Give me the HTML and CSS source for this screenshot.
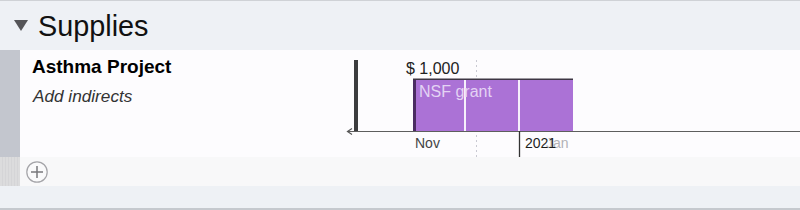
FILE: index.html
```html
<!DOCTYPE html>
<html>
<head>
<meta charset="utf-8">
<link rel="stylesheet" href="styles.css">
</head>
<body>
<div class="panel">
  <div class="header">
    <span class="disclosure"></span>
    <span class="header-title">Supplies</span>
  </div>
  <div class="row">
    <div class="row-bar"></div>
    <div class="row-labels">
      <div class="row-title">Asthma Project</div>
      <div class="row-sub">Add indirects</div>
    </div>
    <svg class="chart" width="470" height="107" viewBox="0 0 470 107">
      <line x1="146.5" y1="10" x2="146.5" y2="107" stroke="#c9c9d2" stroke-width="1" stroke-dasharray="2 3"/>
      <rect x="83" y="29" width="160" height="52" fill="#ab72d6"/>
      <rect x="83" y="29" width="3" height="52" fill="#4b2c62"/>
      <rect x="134" y="29" width="2" height="52" fill="#f6f0fb"/>
      <rect x="188" y="29" width="2" height="52" fill="#f6f0fb"/>
      <rect x="83" y="28.5" width="160" height="1.5" fill="#3e3644"/>
      <line x1="18" y1="81.5" x2="470" y2="81.5" stroke="#5e5e5e" stroke-width="1.2"/>
      <polyline points="22,78.5 17.5,81.5 22,84.5" fill="none" stroke="#555" stroke-width="1.2"/>
      <rect x="24" y="10" width="4" height="71" fill="#3c3c3e"/>
      <line x1="189.5" y1="81" x2="189.5" y2="107" stroke="#333" stroke-width="1.3"/>
      <text x="76" y="24" class="t-amount">$ 1,000</text>
      <text x="89" y="47" class="t-label">NSF grant</text>
      <text x="85" y="98" class="t-axis">Nov</text>
      <text x="216" y="98" class="t-axis-faint">Jan</text>
      <text x="195" y="98" class="t-axis-year">2021</text>
    </svg>
  </div>
  <div class="add-row">
    <div class="add-bar"></div>
    <div class="add-btn">
      <svg width="22" height="22" viewBox="0 0 22 22">
        <circle cx="11" cy="11" r="10.2" fill="#fafafb" stroke="#a4a4a8" stroke-width="1.2"/>
        <line x1="11" y1="5" x2="11" y2="17" stroke="#77777b" stroke-width="1.5"/>
        <line x1="5" y1="11" x2="17" y2="11" stroke="#77777b" stroke-width="1.5"/>
      </svg>
    </div>
  </div>
  <div class="footer"></div>
</div>
</body>
</html>
```

FILE: styles.css
```css
html, body {
  margin: 0;
  padding: 0;
  background: #eef1f5;
}
body {
  width: 800px;
  height: 210px;
  overflow: hidden;
  font-family: "Liberation Sans", Arial, Helvetica, sans-serif;
}
.panel {
  display: flex;
  flex-direction: column;
  width: 800px;
  height: 210px;
  border-top: 1px solid #cfd2d6;
  border-bottom: 2px solid #c5c9ce;
  box-sizing: border-box;
}
.header {
  height: 49px;
  display: flex;
  align-items: center;
  padding-left: 14px;
  background: #eef1f5;
}
.disclosure {
  width: 0;
  height: 0;
  border-left: 7.5px solid transparent;
  border-right: 7.5px solid transparent;
  border-top: 11px solid #555558;
  margin-right: 10px;
}
.header-title {
  font-size: 28.8px;
  line-height: 32px;
  color: #111;
}
.row {
  height: 107px;
  display: flex;
  background: #fdfcfe;
}
.row-bar {
  width: 20px;
  flex-shrink: 0;
  background: #c3c6ce;
}
.row-labels {
  width: 298px;
  flex-shrink: 0;
  padding-left: 12px;
  padding-top: 6px;
}
.row-title {
  font-size: 19px;
  line-height: 22px;
  font-weight: bold;
  color: #000;
}
.row-sub {
  margin-top: 8px;
  padding-left: 1px;
  font-size: 17.2px;
  line-height: 20px;
  font-style: italic;
  color: #333;
}
.chart {
  display: block;
  flex-shrink: 0;
  font-family: "Liberation Sans", Arial, Helvetica, sans-serif;
}
.t-amount {
  font-size: 16px;
  fill: #222;
}
.t-label {
  font-size: 16px;
  fill: #e4d3f4;
}
.t-axis {
  font-size: 14px;
  fill: #444;
}
.t-axis-faint {
  font-size: 14px;
  fill: #b2b2b6;
}
.t-axis-year {
  font-size: 14px;
  fill: #1e1e1e;
}
.add-row {
  height: 29px;
  display: flex;
  background: #f8f8f9;
}
.add-bar {
  width: 20px;
  background: repeating-linear-gradient(90deg, #dcdcdd 0, #dcdcdd 2px, #d5d5d7 2px, #d5d5d7 3px);
}
.add-btn {
  display: flex;
  align-items: center;
  padding-left: 6px;
}
.add-btn svg {
  display: block;
}
.footer {
  flex: 1;
  background: #eef1f5;
}
```
